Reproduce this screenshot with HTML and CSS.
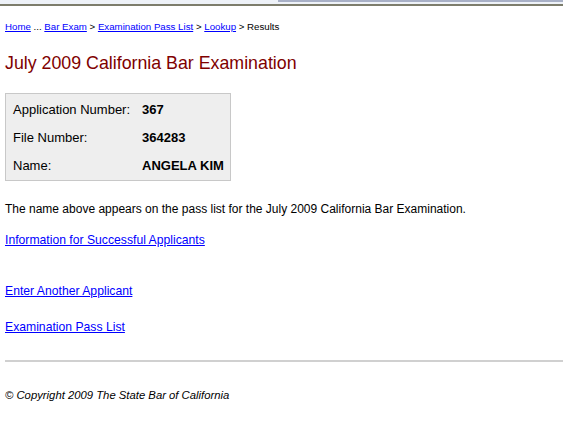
FILE: index.html
```
<!DOCTYPE html>
<html>
<head>
<meta charset="utf-8">
<link rel="stylesheet" href="styles.css">
</head>
<body>
<div class="topbar"><div class="topbar-right"></div></div>
<main class="page">
  <nav class="crumbs"><a href="#">Home</a> ... <a href="#">Bar Exam</a> &gt; <a href="#">Examination Pass List</a> &gt; <a href="#">Lookup</a> &gt; Results</nav>
  <h1 class="title">July 2009 California Bar Examination</h1>
  <div class="info">
    <span class="label">Application Number:</span><span class="value">367</span>
    <span class="label">File Number:</span><span class="value">364283</span>
    <span class="label">Name:</span><span class="value">ANGELA KIM</span>
  </div>
  <p class="note">The name above appears on the pass list for the July 2009 California Bar Examination.</p>
  <p class="link l1"><a href="#">Information for Successful Applicants</a></p>
  <p class="link l2"><a href="#">Enter Another Applicant</a></p>
  <p class="link l3"><a href="#">Examination Pass List</a></p>
  <hr class="rule">
  <p class="copy">© Copyright 2009 The State Bar of California</p>
</main>
</body>
</html>
```
FILE: styles.css
```
html, body { margin: 0; padding: 0; background: #fff; }
body { font-family: "Liberation Sans", Arial, sans-serif; font-size: 12px; color: #000; }
a { color: #0000ff; text-decoration: underline; }

.topbar { height: 4px; background: #eef2f8; border-bottom: 2px solid #7d7d6c; display: flex; justify-content: flex-end; }
.topbar-right { width: 285px; height: 2px; background: #a8b0c6; }

.page { padding-left: 5px; }
.crumbs { margin-top: 14px; font-size: 9.7px; line-height: 14px; }
.title { margin: 18px 0 0; font-size: 17.8px; line-height: 22px; font-weight: normal; color: #800000; }

.info { margin-top: 19px; display: inline-grid; grid-template-columns: 129px auto; grid-auto-rows: 28px; align-items: center; align-content: start; box-sizing: border-box; height: 88px; padding: 1px 6px 0 7px; background: #eeeeee; border: 1px solid #c8c8c8; }
.label { font-size: 13px; }
.value { font-size: 13px; font-weight: bold; }

.note { margin: 21px 0 0; line-height: 14px; }
.link { margin: 0; line-height: 14px; font-size: 12.2px; }
.l1 { margin-top: 17px; }
.l2 { margin-top: 37px; }
.l3 { margin-top: 22px; }
.rule { margin: 26px 0 0; border: 0; height: 2px; background: #d0d0d0; }
.copy { margin: 26px 0 0; font-style: italic; line-height: 14px; font-size: 11.3px; }
```
